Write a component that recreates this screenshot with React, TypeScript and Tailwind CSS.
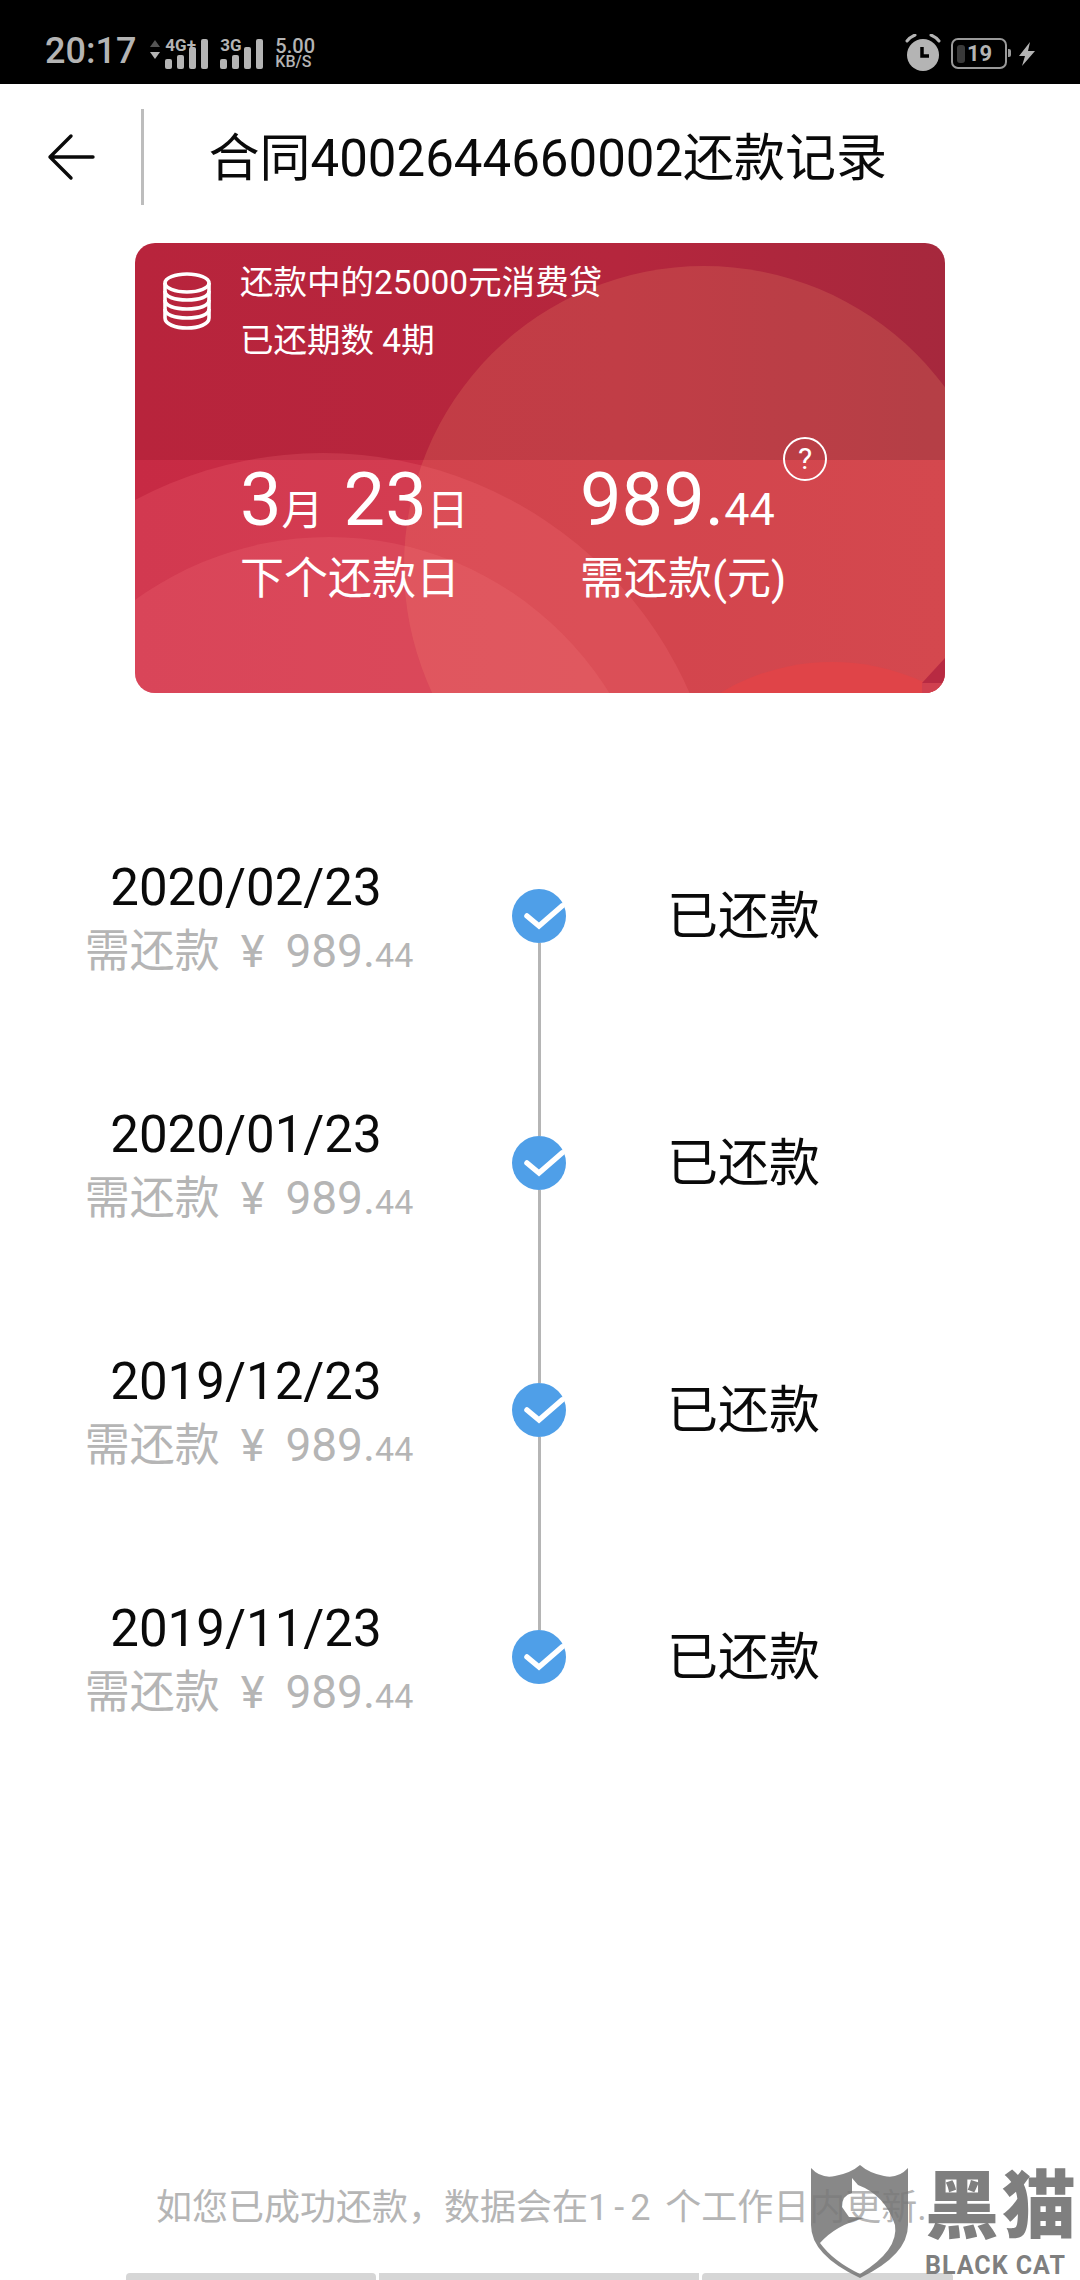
const CJK = "font-['Roboto','Noto_Sans_CJK_SC',sans-serif]";

const records = ['2020/02/23', '2020/01/23', '2019/12/23', '2019/11/23'];

function Signal({ label, className }: { label: string; className: string }) {
  return (
    <div className={`relative w-[43px] h-[30px] ${className}`}>
      <span className="absolute left-0 top-[-1px] text-[17px] leading-[14px] font-bold">{label}</span>
      <div className="absolute bottom-0 left-0 flex items-end gap-[5px]">
        <div className="w-[7px] h-[10px] rounded-[2px] bg-[#b4b4b4]" />
        <div className="w-[7px] h-[14px] rounded-[2px] bg-[#b4b4b4]" />
        <div className="w-[7px] h-[22px] rounded-[2px] bg-[#b4b4b4]" />
        <div className="w-[7px] h-[30px] rounded-[2px] bg-[#b4b4b4]" />
      </div>
    </div>
  );
}

function StatusBar() {
  return (
    <div className="h-[84px] bg-black flex items-end pb-[15px] pl-[45px] pr-[45px] text-[#b4b4b4]">
      <span className="text-[36px] leading-[40px] font-medium -mb-[2px]">20:17</span>
      <svg width="12" height="20" viewBox="0 0 12 20" className="ml-[13px] mb-[9px]">
        <path d="M6 0l5 7H1z" fill="#555" />
        <path d="M6 19l5-7H1z" fill="#b4b4b4" />
      </svg>
      <Signal label="4G+" className="ml-[4px]" />
      <Signal label="3G" className="ml-[12px]" />
      <div className="ml-[12px] flex flex-col font-medium">
        <span className="text-[20px] leading-[18px]">5.00</span>
        <span className="text-[16px] leading-[14px]">KB/S</span>
      </div>
      <div className="ml-auto flex items-end">
        <svg width="36" height="38" viewBox="0 0 36 38" className="mb-[-3px]">
          <circle cx="18" cy="21" r="16" fill="#b4b4b4" />
          <path d="M17 13v9h7" stroke="#000" strokeWidth="3.5" fill="none" />
          <path d="M2 7q3-4 8-6M34 7q-3-4-8-6" stroke="#b4b4b4" strokeWidth="3" fill="none" strokeLinecap="round" />
        </svg>
        <div className="relative ml-[10px] flex items-center w-[56px] h-[31px] border-[2.5px] border-[#9a9a9a] rounded-[7px] pl-[4px]">
          <div className="w-[8px] h-[18px] rounded-[3px] bg-[#3a3a3a]" />
          <span className="ml-[2px] text-[22px] leading-none font-bold">19</span>
          <div className="absolute right-[-6px] top-[9px] w-[3px] h-[8px] bg-[#9a9a9a] rounded-r-[2px]" />
        </div>
        <svg width="16" height="24" viewBox="0 0 16 24" className="ml-[12px] mb-[3px]">
          <path d="M11 0L0 14h6l-3 10L16 9H9z" fill="#b4b4b4" />
        </svg>
      </div>
    </div>
  );
}

function Header() {
  return (
    <div className="h-[146px] flex items-center bg-white">
      <svg width="48" height="48" viewBox="0 0 48 48" className="ml-[47px]">
        <path d="M46 24H3M24 3L3 24l21 21" stroke="#0a0a0a" strokeWidth="3.4" fill="none" strokeLinecap="round" strokeLinejoin="round" />
      </svg>
      <div className="ml-[46px] w-[2.5px] h-[96px] bg-[#bdbdbd]" />
      <h1 className="ml-[65px] mt-[2px] text-[51px] leading-none font-normal text-[#0a0a0a] whitespace-nowrap">合同4002644660002还款记录</h1>
    </div>
  );
}

function CardArt() {
  return (
    <svg className="absolute inset-0" width="810" height="450" viewBox="0 0 810 450">
      <defs>
        <linearGradient id="top" x1="0" x2="1" y1="0" y2="0">
          <stop offset="0" stopColor="#b8243c" />
          <stop offset="0.6" stopColor="#b5263d" />
          <stop offset="1" stopColor="#a6283d" />
        </linearGradient>
        <linearGradient id="bottom" x1="0" x2="1" y1="0" y2="0">
          <stop offset="0" stopColor="#c72a44" />
          <stop offset="1" stopColor="#cc3346" />
        </linearGradient>
      </defs>
      <rect width="810" height="217" fill="url(#top)" />
      <rect y="217" width="810" height="233" fill="url(#bottom)" />
      <circle cx="569" cy="323" r="300" fill="#ffb078" fillOpacity="0.17" />
      <circle cx="188" cy="610" r="400" fill="#ff7a80" fillOpacity="0.2" />
      <circle cx="194" cy="624" r="330" fill="#ff8a8a" fillOpacity="0.16" />
      <circle cx="697" cy="637" r="218" fill="#e04448" />
      <path d="M810 415v25h-23z" fill="#b82a42" />
      <path d="M787 440h23v10h-23z" fill="#d0404f" />
    </svg>
  );
}

function RepayCard() {
  return (
    <div className="relative mx-[135px] mt-[13px] h-[450px] rounded-[20px] overflow-hidden text-white">
      <CardArt />
      <div className="relative flex pt-[20px] pl-[28px]">
        <svg width="48" height="58" viewBox="0 0 48 58" className="mt-[9px]">
          <g fill="none" stroke="#fff" strokeWidth="3.6">
            <ellipse cx="24" cy="11" rx="22" ry="9" />
            <path d="M2 11v35c0 6 10 10 22 10s22-4 22-10V11" />
            <path d="M2 19c0 6 10 9 22 9s22-3 22-9M2 28c0 6 10 9 22 9s22-3 22-9M2 37c0 6 10 9 22 9s22-3 22-9" />
          </g>
        </svg>
        <div className="ml-[29px] flex flex-col gap-[19px] text-[33.5px] leading-[39px]">
          <span>还款中的25000元消费贷</span>
          <span>已还期数 4期</span>
        </div>
      </div>
      <div className="relative flex mt-[103px] pl-[105px]">
        <div className="w-[340px]">
          <div className="h-[82px] flex items-baseline leading-none whitespace-nowrap">
            <span className="text-[74px]">3</span>
            <span className="text-[42px]">月</span>
            <span className="text-[74px] ml-[20px]">23</span>
            <span className="text-[42px]">日</span>
          </div>
          <div className="mt-[8px] text-[44px] leading-[52px]">下个还款日</div>
        </div>
        <div className="relative">
          <div className="h-[82px] flex items-baseline leading-none whitespace-nowrap">
            <span className="text-[74px]">989.</span>
            <span className="text-[45px]">44</span>
          </div>
          <div className="mt-[8px] text-[44px] leading-[52px]">需还款(元)</div>
          <div className="absolute left-[203px] top-[-26px] w-[44px] h-[44px] rounded-full border-[2.5px] border-white flex items-center justify-center text-[30px] leading-none">?</div>
        </div>
      </div>
    </div>
  );
}

function CheckDot() {
  return (
    <svg width="54" height="54" viewBox="0 0 54 54" className="shrink-0">
      <circle cx="27" cy="27" r="27" fill="#4f9fe8" />
      <path d="M15 27l12 10 23-20" stroke="#fff" strokeWidth="5.5" fill="none" strokeLinecap="round" />
    </svg>
  );
}

function Timeline() {
  return (
    <div className="mt-[196px]">
      {records.map((date, i) => (
        <div key={date} className="flex h-[247px]">
          <div className="w-[498px] -mt-[30px] flex flex-col items-center">
            <div className="text-[51px] leading-[58px] text-[#0a0a0a] -ml-[6px]">{date}</div>
            <div className="mt-[7px] flex items-baseline text-[#b5b5b5] leading-[54px] whitespace-nowrap">
              <span className="text-[45px]">需还款</span>
              <span className="text-[45px] ml-[21px]">¥</span>
              <span className="text-[46px] ml-[21px]">989.</span>
              <span className="text-[34px]">44</span>
            </div>
          </div>
          <div className="ml-[14px] w-[54px] flex flex-col items-center">
            <CheckDot />
            {i < records.length - 1 && <div className="w-[3px] flex-1 bg-[#b5b5b5]" />}
          </div>
          <div className="ml-[101px] h-[54px] flex items-center text-[51px] leading-none text-[#0a0a0a]">已还款</div>
        </div>
      ))}
    </div>
  );
}

function Watermark() {
  return (
    <div className="absolute left-[811px] top-[2165px] w-[269px] h-[115px] flex text-[#7f7f7f]">
      <svg width="97" height="113" viewBox="0 0 97 113" className="shrink-0">
        {/* shield with the cat cut out, the page text shows through */}
        <path
          fillRule="evenodd"
          fill="#777"
          fillOpacity="0.88"
          d="M0 3Q10 14 24 11Q40 8 49 0Q58 8 73 11Q87 14 97 3V60Q97 90 49 113Q0 90 0 60ZM41 13L47 20Q74 30 84 60Q88 85 49 109Q22 96 9 78Q25 60 53 53Q45 52 38 52L31 42Q31 30 41 28Z"
        />
      </svg>
      <div className="ml-[17px] flex flex-col whitespace-nowrap">
        <span className="mt-[6px] text-[74px] leading-[72px] font-black tracking-[3px]">黑猫</span>
        <span className="mt-[11px] text-[25px] leading-[24px] font-bold tracking-[1px]">BLACK CAT</span>
      </div>
    </div>
  );
}

export default function App() {
  return (
    <div className={`relative w-[1080px] h-[2280px] bg-white overflow-hidden ${CJK}`}>
      <StatusBar />
      <Header />
      <RepayCard />
      <Timeline />
      <div className="absolute left-[156px] top-[2186px] text-[36px] leading-[44px] text-[#b5b5b5] whitespace-nowrap">
        如您已成功还款，数据会在<span className="tracking-[6px]">1-2</span> 个工作日内更新.
      </div>
      <div className="absolute bottom-0 left-[126px] flex gap-[3px]">
        <div className="w-[250px] h-[7px] rounded-t-[4px] bg-[#d6d6d6]" />
        <div className="w-[320px] h-[7px] bg-[#d6d6d6]" />
        <div className="w-[251px] h-[7px] rounded-t-[4px] bg-[#d6d6d6]" />
      </div>
      <Watermark />
    </div>
  );
}
